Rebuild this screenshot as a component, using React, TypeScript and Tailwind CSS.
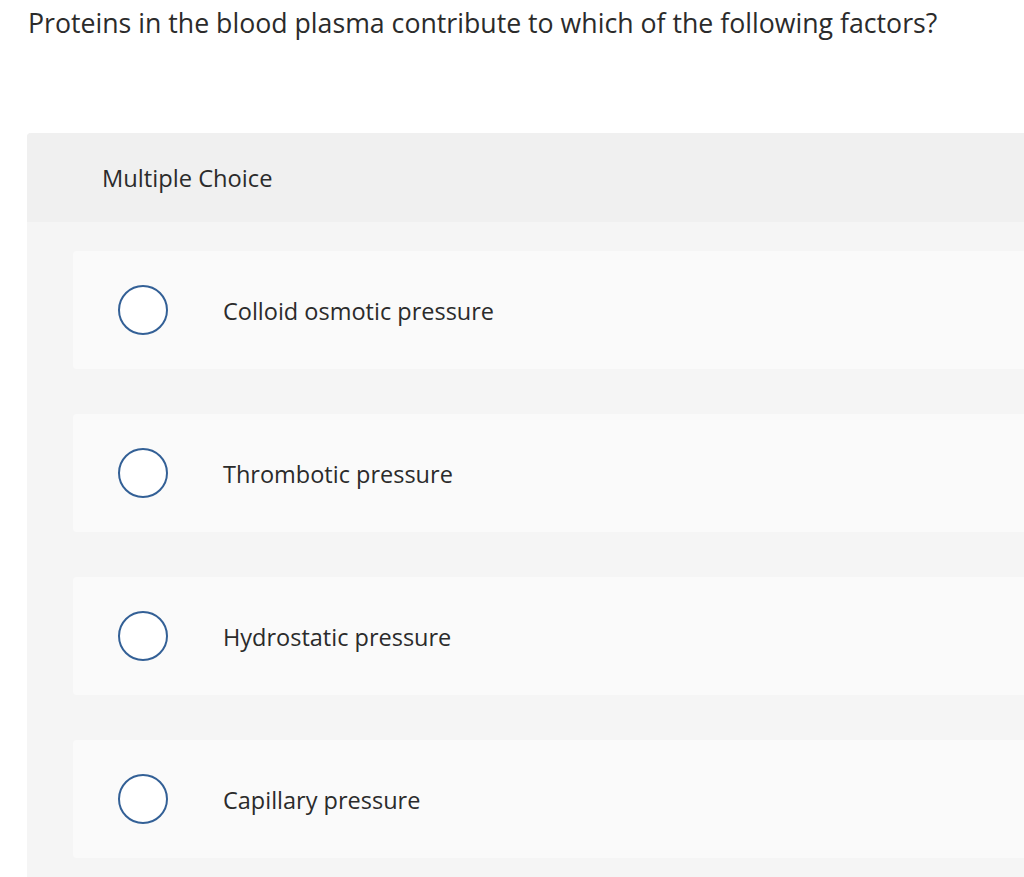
const OPTIONS = [
  "Colloid osmotic pressure",
  "Thrombotic pressure",
  "Hydrostatic pressure",
  "Capillary pressure",
];

export default function App() {
  return (
    <div
      className="h-[877px] w-[1024px] overflow-hidden bg-white text-[#2b2b2b]"
      style={{ fontFamily: "'Open Sans', Lato, sans-serif" }}
    >
      <h1 className="pl-[28px] pt-[5px] text-[26.7px] leading-[36px] font-normal">
        Proteins in the blood plasma contribute to which of the following factors?
      </h1>

      <div className="ml-[27px] mt-[92px] w-[1040px] rounded-tl-[4px] bg-[#f5f5f5]">
        <div className="flex h-[89px] items-center rounded-tl-[4px] bg-[#f0f0f0] pl-[75px] pt-[2px] text-[23.7px]">
          Multiple Choice
        </div>
        <div className="flex flex-col gap-[45px] pl-[46px] pt-[29px] pb-[20px]">
          {OPTIONS.map((opt) => (
            <div
              key={opt}
              className="flex h-[118px] items-center rounded-[4px] bg-[#fafafa] pl-[45px]"
            >
              <div className="h-[50px] w-[50px] shrink-0 rounded-full border-2 border-[#336096] bg-white" />
              <div className="ml-[55px] mt-[4px] text-[23.5px]">{opt}</div>
            </div>
          ))}
        </div>
      </div>
    </div>
  );
}
